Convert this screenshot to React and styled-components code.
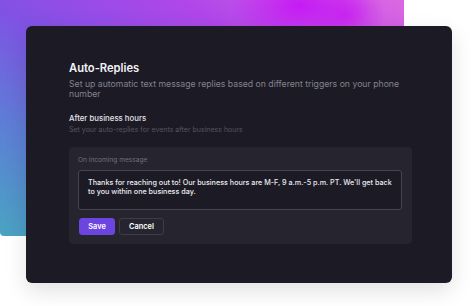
import React from "react";
import styled, { createGlobalStyle } from "styled-components";

const Global = createGlobalStyle`
  html, body { margin: 0; padding: 0; background: #ffffff; }
  body { font-family: Inter, "Noto Sans", "Liberation Sans", sans-serif; -webkit-font-smoothing: antialiased; }
  * { box-sizing: border-box; }
`;

const Stage = styled.div`
  display: grid;
  width: 474px;
  height: 306px;
  background: #ffffff;
  overflow: hidden;
`;

const Backdrop = styled.div`
  grid-area: 1 / 1;
  align-self: start;
  justify-self: start;
  width: 404px;
  height: 236px;
  border-radius: 0 0 6px 4px;
  background:
    radial-gradient(70px 40px at 300px 6px, rgba(198, 22, 246, 0.95), rgba(198, 22, 246, 0) 100%),
    radial-gradient(40px 30px at 345px 14px, rgba(200, 30, 240, 0.8), rgba(200, 30, 240, 0) 100%),
    linear-gradient(to bottom left, #dc68e2 0%, #b046ea 28%, #8052e4 52%, #5e7dd6 75%, #49a4c2 100%);
`;

const Card = styled.section`
  grid-area: 1 / 1;
  align-self: start;
  justify-self: start;
  margin: 26px 0 0 26px;
  width: 426px;
  height: 257px;
  background: #1c1b25;
  border-radius: 6px;
  box-shadow: 0 8px 22px rgba(0, 0, 0, 0.12);
  padding: 34px 40px 0 43px;
  display: flex;
  flex-direction: column;
`;

const Title = styled.h1`
  margin: 0;
  font-size: 11.2px;
  line-height: 16px;
  font-weight: 600;
  color: #f3f3f7;
`;

const Subtitle = styled.p`
  margin: 3px 0 0;
  font-size: 8.7px;
  line-height: 10px;
  color: #83828e;
  max-width: 340px;
`;

const SectionTitle = styled.h2`
  margin: 14px 0 0;
  font-size: 7.8px;
  line-height: 10px;
  font-weight: 500;
  color: #e4e4ea;
`;

const SectionDesc = styled.p`
  margin: 2px 0 0;
  font-size: 7px;
  line-height: 10px;
  color: #565561;
`;

const Panel = styled.div`
  margin-top: 12px;
  width: 343px;
  background: #25242f;
  border-radius: 4px;
  padding: 8px 10px 9px 9px;
  display: flex;
  flex-direction: column;
`;

const FieldLabel = styled.label`
  font-size: 6.6px;
  line-height: 10px;
  color: #73717e;
`;

const MessageBox = styled.div`
  margin-top: 5px;
  height: 40px;
  border: 1px solid #46454f;
  border-radius: 3px;
  background: #1c1b25;
  padding: 7px 5px 0 9px;
  font-size: 7.2px;
  line-height: 9px;
  font-weight: 500;
  color: #ececf1;
`;

const Actions = styled.div`
  margin-top: 8px;
  display: flex;
  gap: 4px;
  padding-left: 1px;
`;

const Button = styled.button`
  height: 17px;
  padding: 0 ${(p) => (p.$primary ? "8px" : "9px")};
  border-radius: 3px;
  font-family: inherit;
  font-size: 7.4px;
  font-weight: 600;
  color: #ffffff;
  background: ${(p) => (p.$primary ? "#6c44e0" : "transparent")};
  border: 1px solid ${(p) => (p.$primary ? "#6c44e0" : "#3d3c47")};
  min-width: ${(p) => (p.$primary ? "36px" : "45px")};
  cursor: pointer;
`;

export default function App() {
  return (
    <>
      <Global />
      <Stage>
        <Backdrop />
        <Card>
          <Title>Auto-Replies</Title>
          <Subtitle>
            Set up automatic text message replies based on different triggers on your phone number
          </Subtitle>
          <SectionTitle>After business hours</SectionTitle>
          <SectionDesc>Set your auto-replies for events after business hours</SectionDesc>
          <Panel>
            <FieldLabel>On incoming message</FieldLabel>
            <MessageBox>
              Thanks for reaching out to! Our business hours are M-F, 9 a.m.-5 p.m. PT. We'll get back to you within one business day.
            </MessageBox>
            <Actions>
              <Button $primary>Save</Button>
              <Button>Cancel</Button>
            </Actions>
          </Panel>
        </Card>
      </Stage>
    </>
  );
}
